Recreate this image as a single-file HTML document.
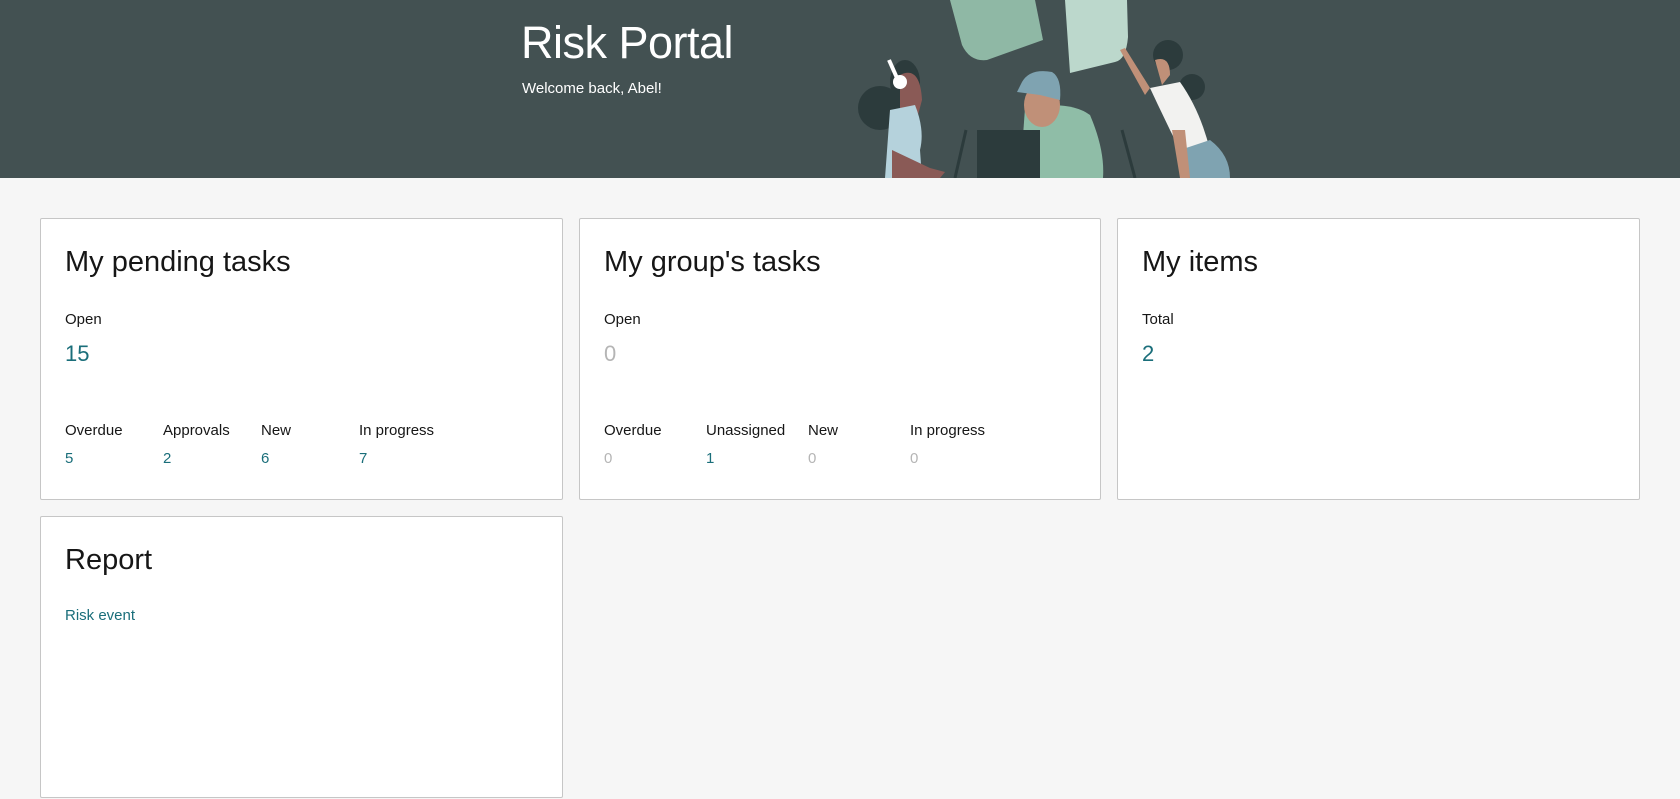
<!DOCTYPE html>
<html><head><meta charset="utf-8"><style>
*{margin:0;padding:0;box-sizing:border-box}
body{width:1680px;height:799px;background:#f6f6f6;font-family:"Liberation Sans",sans-serif;color:#161616;position:relative;overflow:hidden}
.hdr{position:absolute;left:0;top:0;width:1680px;height:178px;background:#435152}
.hdr h1{position:absolute;left:521px;top:17px;font-size:45px;font-weight:400;color:#fff;letter-spacing:-0.5px}
.hdr p{position:absolute;left:522px;top:80px;font-size:15px;color:#fff}
.card{position:absolute;background:#fff;border:1px solid #c6c6c6;border-radius:2px}
.card h2{position:absolute;left:24px;top:27px;font-size:29px;font-weight:400}
.lbl{position:absolute;font-size:15px}
.big{position:absolute;font-size:22px;color:#1a6e7a}
.num{position:absolute;font-size:15px;color:#1a6e7a}
.g{color:#b5b5b5}
</style></head><body>
<div class="hdr">
<h1>Risk Portal</h1>
<p>Welcome back, Abel!</p>
<svg width="1680" height="178" style="position:absolute;left:0;top:0">
<path d="M950 0 L1035 0 L1043 40 L987 60 Q970 62 962 45 Z" fill="#8fb8a5"/>
<path d="M1065 0 L1127 0 L1128 37 Q1126 60 1115 62 L1070 73 Z" fill="#bcd8cc"/>
<circle cx="880" cy="108" r="22" fill="#2c3b3c"/>
<ellipse cx="905" cy="82" rx="15" ry="22" fill="#2c3b3c"/>
<path d="M900 75 Q920 65 922 100 L918 115 L900 120 Z" fill="#8a5a56"/>
<path d="M889 60 L897 78" stroke="#fff" stroke-width="4"/>
<circle cx="900" cy="82" r="7" fill="#fff"/>
<path d="M890 110 L915 105 Q925 130 920 150 L922 178 L885 178 Z" fill="#b5d2dc"/>
<path d="M892 150 L930 168 L945 172 L940 178 L892 178 Z" fill="#8a5a56"/>
<path d="M966 130 L955 178" stroke="#2c3b3c" stroke-width="3"/>
<path d="M1025 108 Q1070 100 1090 115 Q1105 150 1103 178 L1020 178 Z" fill="#8fbda7"/>
<ellipse cx="1042" cy="105" rx="18" ry="22" fill="#c09078"/>
<path d="M1022 82 Q1030 68 1052 72 Q1062 78 1060 100 L1040 95 L1017 92 Z" fill="#7fa3b1"/>
<rect x="977" y="130" width="63" height="48" fill="#2c3b3c"/>
<path d="M1120 50 L1125 48 L1150 88 L1145 95 Z" fill="#c09078"/>
<circle cx="1168" cy="55" r="15" fill="#2c3b3c"/>
<circle cx="1192" cy="87" r="13" fill="#2c3b3c"/>
<path d="M1155 60 Q1170 55 1170 75 L1162 85 Z" fill="#c09078"/>
<path d="M1150 88 L1180 82 Q1200 110 1210 150 L1185 160 L1170 130 L1158 105 Z" fill="#f2f2f0"/>
<path d="M1180 150 L1210 140 Q1230 155 1230 178 L1190 178 Z" fill="#7fa3b1"/>
<path d="M1172 130 L1180 178 L1190 178 L1185 130 Z" fill="#c09078"/>
<path d="M1122 130 L1135 178" stroke="#2c3b3c" stroke-width="3"/>
</svg>
</div>

<div class="card" style="left:40px;top:218px;width:523px;height:282px">
<h2>My pending tasks</h2>
<div class="lbl" style="left:24px;top:92px">Open</div>
<div class="big" style="left:24px;top:122px">15</div>
<div class="lbl" style="left:24px;top:203px">Overdue</div>
<div class="lbl" style="left:122px;top:203px">Approvals</div>
<div class="lbl" style="left:220px;top:203px">New</div>
<div class="lbl" style="left:318px;top:203px">In progress</div>
<div class="num" style="left:24px;top:231px">5</div>
<div class="num" style="left:122px;top:231px">2</div>
<div class="num" style="left:220px;top:231px">6</div>
<div class="num" style="left:318px;top:231px">7</div>
</div>

<div class="card" style="left:579px;top:218px;width:522px;height:282px">
<h2>My group's tasks</h2>
<div class="lbl" style="left:24px;top:92px">Open</div>
<div class="big g" style="left:24px;top:122px">0</div>
<div class="lbl" style="left:24px;top:203px">Overdue</div>
<div class="lbl" style="left:126px;top:203px">Unassigned</div>
<div class="lbl" style="left:228px;top:203px">New</div>
<div class="lbl" style="left:330px;top:203px">In progress</div>
<div class="num g" style="left:24px;top:231px">0</div>
<div class="num" style="left:126px;top:231px">1</div>
<div class="num g" style="left:228px;top:231px">0</div>
<div class="num g" style="left:330px;top:231px">0</div>
</div>

<div class="card" style="left:1117px;top:218px;width:523px;height:282px">
<h2>My items</h2>
<div class="lbl" style="left:24px;top:92px">Total</div>
<div class="big" style="left:24px;top:122px">2</div>
</div>

<div class="card" style="left:40px;top:516px;width:523px;height:282px">
<h2>Report</h2>
<div class="num" style="left:24px;top:90px">Risk event</div>
</div>
</body></html>
